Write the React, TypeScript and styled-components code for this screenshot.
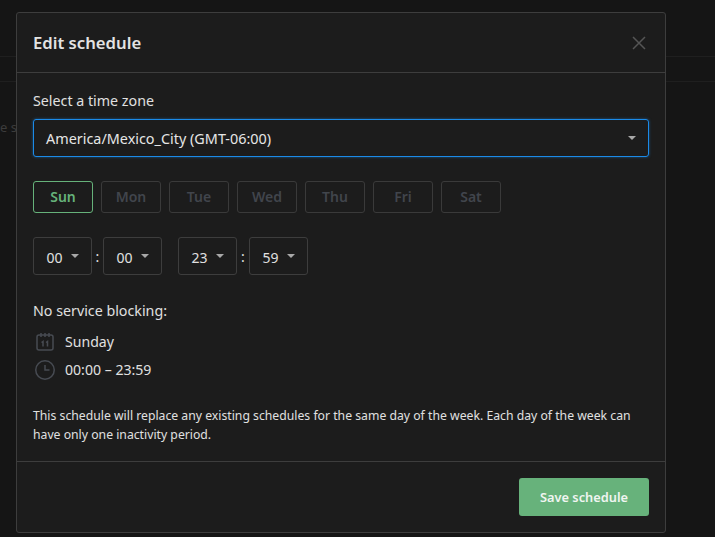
import React from "react";
import styled, { createGlobalStyle } from "styled-components";

const Global = createGlobalStyle`
  html, body { margin: 0; padding: 0; height: 100%; background: #151515; overflow: hidden; }
  * { box-sizing: border-box; }
  #root { height: 100%; }
`;

const Page = styled.div`
  position: relative;
  width: 715px;
  height: 537px;
  overflow: hidden;
  background: #151515;
  font-family: "Noto Sans", "Open Sans", sans-serif;
  color: #e6e6e6;
`;

const BackdropBar = styled.div`
  margin-top: 56px;
  height: 26px;
  border-top: 1px solid #1f1f1f;
  border-bottom: 1px solid #1f1f1f;
`;

const BackdropText = styled.div`
  padding: 36px 0 0 0;
  font-size: 13px;
  line-height: 18px;
  color: #3c3c3c;
  white-space: nowrap;
`;

const Modal = styled.div`
  position: absolute;
  left: 16px;
  top: 12px;
  width: 650px;
  height: 521px;
  display: flex;
  flex-direction: column;
  background: #1c1c1c;
  border: 1px solid #3d3d3d;
  border-radius: 3px;
`;

const Header = styled.div`
  height: 60px;
  flex: none;
  display: flex;
  align-items: center;
  justify-content: space-between;
  padding: 0 19px 0 16px;
  border-bottom: 1px solid #3d3d3d;
`;

const Title = styled.h2`
  margin: 0;
  font-size: 16.7px;
  font-weight: 600;
  color: #e3e3e3;
`;

const CloseIcon = styled.svg`
  display: block;
  width: 14px;
  height: 14px;
  stroke: #555;
  stroke-width: 1.5;
  fill: none;
`;

const Body = styled.div`
  flex: 1;
  padding: 18px 16px 0;
  display: flex;
  flex-direction: column;
`;

const Label = styled.div`
  font-size: 14.25px;
  line-height: 20px;
  color: #e0e0e0;
`;

const Caret = styled.span`
  width: 0;
  height: 0;
  flex: none;
  border-left: 4.5px solid transparent;
  border-right: 4.5px solid transparent;
  border-top: 4.5px solid #a8a8a8;
`;

const ZoneSelect = styled.div`
  margin-top: 8px;
  height: 38px;
  display: flex;
  align-items: center;
  justify-content: space-between;
  padding: 0 12px;
  border: 1px solid #1b8ae8;
  border-radius: 3px;
  box-shadow: 0 0 3px rgba(27, 138, 232, 0.55);
  font-size: 14.4px;
  color: #e6e6e6;
`;

const Days = styled.div`
  margin-top: 24px;
  display: flex;
  gap: 8px;
`;

const Day = styled.div<{ $active?: boolean }>`
  width: 60px;
  height: 32px;
  padding-bottom: 2px;
  display: flex;
  align-items: center;
  justify-content: center;
  border: 1px solid ${(p) => (p.$active ? "#66b27a" : "#3a3a3a")};
  border-radius: 3px;
  font-size: 14px;
  font-weight: 600;
  color: ${(p) => (p.$active ? "#66b27a" : "#41454c")};
`;

const Times = styled.div`
  margin-top: 24px;
  display: flex;
  align-items: center;
`;

const TimeSelect = styled.div`
  width: 59px;
  height: 38px;
  display: flex;
  align-items: center;
  justify-content: center;
  gap: 8px;
  border: 1px solid #3d3d3d;
  border-radius: 3px;
  font-size: 14px;
  color: #e0e0e0;
`;

const TimeValue = styled.span`
  position: relative;
  top: 1px;
`;

const Colon = styled.span<{ $wide?: boolean }>`
  width: ${(p) => (p.$wide ? "12px" : "11px")};
  text-align: center;
  font-size: 14px;
  color: #e0e0e0;
`;

const RangeGap = styled.div`
  width: 16px;
`;

const Summary = styled.div`
  margin-top: 26px;
`;

const InfoRow = styled.div<{ $first?: boolean }>`
  margin-top: ${(p) => (p.$first ? "10px" : "7px")};
  display: flex;
  align-items: center;
  height: 21px;
  font-size: 14.1px;
  color: #e0e0e0;
`;

const InfoIcon = styled.svg`
  width: 24px;
  height: 24px;
  flex: none;
  margin-right: 8px;
  fill: none;
  stroke: #474b52;
  stroke-width: 1.5;
`;

const Note = styled.p`
  margin: 26px 0 0;
  font-size: 12.22px;
  line-height: 19px;
  color: #e0e0e0;
`;

const Footer = styled.div`
  height: 71px;
  flex: none;
  display: flex;
  align-items: center;
  justify-content: flex-end;
  padding: 0 16px;
  border-top: 1px solid #3d3d3d;
`;

const SaveButton = styled.button`
  width: 130px;
  height: 38px;
  border: none;
  border-radius: 3px;
  background: #67b27b;
  color: #f0f5f1;
  font-family: inherit;
  font-size: 12.8px;
  font-weight: 600;
`;

const days = ["Sun", "Mon", "Tue", "Wed", "Thu", "Fri", "Sat"];

const Time = ({ v }: { v: string }) => (
  <TimeSelect>
    <TimeValue>{v}</TimeValue>
    <Caret />
  </TimeSelect>
);

export default function App() {
  return (
    <Page>
      <Global />
      <BackdropBar />
      <BackdropText>e se</BackdropText>
      <Modal>
        <Header>
          <Title>Edit schedule</Title>
          <CloseIcon viewBox="0 0 14 14">
            <path d="M1 1l12 12M13 1L1 13" />
          </CloseIcon>
        </Header>
        <Body>
          <Label>Select a time zone</Label>
          <ZoneSelect>
            America/Mexico_City (GMT-06:00)
            <Caret />
          </ZoneSelect>
          <Days>
            {days.map((d, i) => (
              <Day key={d} $active={i === 0}>
                {d}
              </Day>
            ))}
          </Days>
          <Times>
            <Time v="00" />
            <Colon>:</Colon>
            <Time v="00" />
            <RangeGap />
            <Time v="23" />
            <Colon $wide>:</Colon>
            <Time v="59" />
          </Times>
          <Summary>
            <Label>No service blocking:</Label>
            <InfoRow $first>
              <InfoIcon viewBox="0 0 24 24">
                <rect x="4" y="5" width="16" height="15" rx="2" />
                <path d="M8 3v4M12 3v4M16 3v4M8.5 12.5l1.5-1v5M13 12.5l1.5-1v5" />
              </InfoIcon>
              Sunday
            </InfoRow>
            <InfoRow>
              <InfoIcon viewBox="0 0 24 24">
                <circle cx="12" cy="12" r="9.25" />
                <path d="M12 7v5h4.5" />
              </InfoIcon>
              00:00 – 23:59
            </InfoRow>
          </Summary>
          <Note>
            This schedule will replace any existing schedules for the same day of the week. Each day of the week can
            have only one inactivity period.
          </Note>
        </Body>
        <Footer>
          <SaveButton>Save schedule</SaveButton>
        </Footer>
      </Modal>
    </Page>
  );
}
